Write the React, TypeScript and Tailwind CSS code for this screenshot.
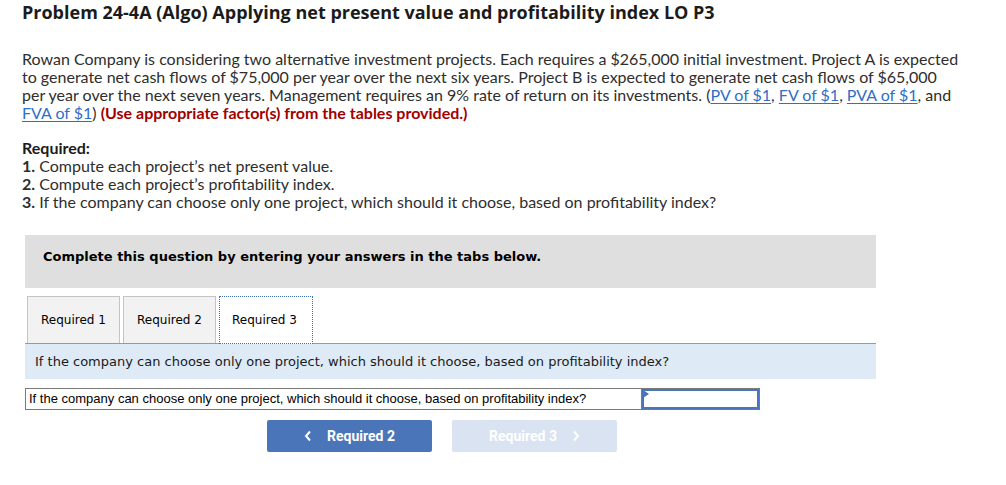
import React from "react";

const bodyFont = { fontFamily: "Lato, 'Open Sans', sans-serif" };

const Link: React.FC<{ children: React.ReactNode }> = ({ children }) => (
  <a href="#" className="text-[#2f6fc4] underline underline-offset-2">
    {children}
  </a>
);

const Tab: React.FC<{ label: string; active?: boolean }> = ({ label, active }) =>
  active ? (
    <div className="flex h-[48px] w-[94px] items-center justify-center border border-dotted border-[#3f6fb5] bg-white pr-[3px] text-[12px] text-black">
      {label}
    </div>
  ) : (
    <div className="flex h-[47px] w-[93px] items-center justify-center border border-[#c4c4c4] border-b-0 bg-[#f2f2f2] text-[12px] text-black">
      {label}
    </div>
  );

export default function App() {
  return (
    <div className="h-[485px] w-[1006px] bg-white text-[#2e2e2e]" style={bodyFont}>
      <div className="px-[22px] pt-[1px]">
        <h1
          className="text-[18px] font-bold leading-[22px] text-[#1b1b1b]"
          style={{ fontFamily: "'Open Sans', Lato, sans-serif" }}
        >
          Problem 24-4A (Algo) Applying net present value and profitability index LO P3
        </h1>

        <p className="mt-[27px] text-[16px] leading-[18px]">
          Rowan Company is considering two alternative investment projects. Each requires a $265,000 initial investment. Project A is expected
          <br />
          to generate net cash flows of $75,000 per year over the next six years. Project B is expected to generate net cash flows of $65,000
          <br />
          per year over the next seven years. Management requires an 9% rate of return on its investments. (<Link>PV of $1</Link>,{" "}
          <Link>FV of $1</Link>, <Link>PVA of $1</Link>, and
          <br />
          <Link>FVA of $1</Link>) <span className="font-bold text-[#a10000]">(Use appropriate factor(s) from the tables provided.)</span>
        </p>

        <div className="mt-[17px] text-[16px] leading-[18px]">
          <div className="font-bold text-[#1b1b1b]">Required:</div>
          <div>
            <span className="font-bold">1.</span> Compute each project’s net present value.
          </div>
          <div>
            <span className="font-bold">2.</span> Compute each project’s profitability index.
          </div>
          <div>
            <span className="font-bold">3.</span> If the company can choose only one project, which should it choose, based on profitability index?
          </div>
        </div>
      </div>

      <div className="ml-[25px] mt-[24px] w-[851px]" style={{ fontFamily: "'DejaVu Sans', Verdana, sans-serif" }}>
        <div className="h-[53px] bg-[#dfdfdf] pl-[18px] pt-[14px] text-[13px] font-bold leading-[16px] text-black">
          Complete this question by entering your answers in the tabs below.
        </div>

        <div className="mt-[8px] flex items-end gap-[3px] pl-[2px]">
          <Tab label="Required 1" />
          <Tab label="Required 2" />
          <div className="-mb-[1px]">
            <Tab label="Required 3" active />
          </div>
        </div>
        <div className="border-t border-[#9a9a9a]" />

        <div className="flex h-[35px] items-center bg-[#deebf7] pl-[10px] text-[13px] text-[#1a1a1a]">
          If the company can choose only one project, which should it choose, based on profitability index?
        </div>

        <div className="mt-[9px] flex h-[22px] w-[735px] border border-[#7a7a7a]">
          <div
            className="flex flex-1 items-center pl-[3px] text-[13px] text-black"
            style={{ fontFamily: "'Liberation Sans', Arial, sans-serif" }}
          >
            If the company can choose only one project, which should it choose, based on profitability index?
          </div>
          <div className="relative w-[118px] border-l border-[#7a7a7a]">
            <div className="absolute inset-0 border-2 border-[#4a76b9]" />
            <div className="absolute left-[1px] top-[1px] h-0 w-0 border-y-[4px] border-l-[6px] border-y-transparent border-l-[#4a76b9]" />
          </div>
        </div>

        <div className="mt-[10px] flex justify-center gap-[20px] pr-[17px]" style={{ fontFamily: "Roboto, sans-serif" }}>
          <button className="flex h-[32px] w-[165px] items-center justify-center gap-[15px] rounded-[2px] bg-[#4a76b9] text-[14px] font-bold text-white">
            <svg width="8" height="12" viewBox="0 0 8 12">
              <path d="M6 1.5 L2 6 L6 10.5" stroke="white" strokeWidth="2" fill="none" />
            </svg>
            Required 2
          </button>
          <button className="flex h-[32px] w-[165px] items-center justify-center gap-[15px] rounded-[2px] bg-[#dae3f1] text-[14px] font-bold text-white">
            Required 3
            <svg width="8" height="12" viewBox="0 0 8 12">
              <path d="M2 1.5 L6 6 L2 10.5" stroke="white" strokeWidth="2" fill="none" />
            </svg>
          </button>
        </div>
      </div>
    </div>
  );
}
